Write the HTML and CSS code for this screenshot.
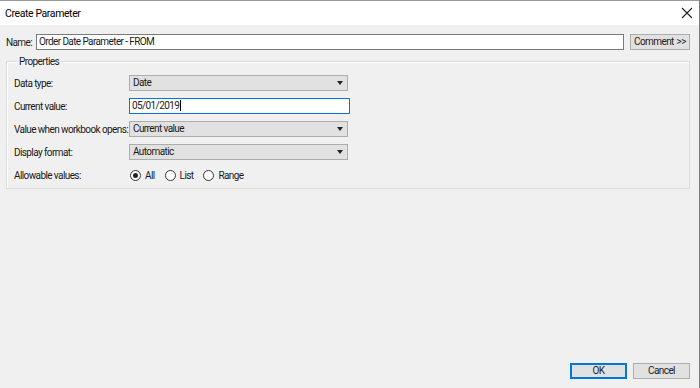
FILE: index.html
```html
<!DOCTYPE html>
<html lang="en">
<head>
    <meta charset="UTF-8">
    <title>Create Parameter</title>
    <link rel="stylesheet" href="styles.css">
</head>
<body>
    <div class="window">
        <div class="titlebar">
            <span class="title">Create Parameter</span>
            <svg class="close" width="12" height="12" viewBox="0 0 12 12">
                <path d="M1 1 L11 11 M11 1 L1 11" stroke="#222" stroke-width="1.1" fill="none"/>
            </svg>
        </div>
        <div class="content">
            <div class="name-row">
                <label class="name-label">Name:</label>
                <div class="textbox name-input">Order Date Parameter - FROM</div>
                <div class="button comment">Comment &gt;&gt;</div>
            </div>

            <fieldset class="properties">
                <legend>Properties</legend>
                <div class="row">
                    <span class="label">Data type:</span>
                    <div class="dropdown"><span>Date</span><span class="arrow"></span></div>
                </div>
                <div class="row">
                    <span class="label">Current value:</span>
                    <div class="textbox focused">05/01/2019<span class="caret"></span></div>
                </div>
                <div class="row">
                    <span class="label">Value when workbook opens:</span>
                    <div class="dropdown"><span>Current value</span><span class="arrow"></span></div>
                </div>
                <div class="row">
                    <span class="label">Display format:</span>
                    <div class="dropdown"><span>Automatic</span><span class="arrow"></span></div>
                </div>
                <div class="row">
                    <span class="label">Allowable values:</span>
                    <div class="radios">
                        <span class="radio checked"></span><span class="radio-text">All</span>
                        <span class="radio"></span><span class="radio-text">List</span>
                        <span class="radio"></span><span class="radio-text">Range</span>
                    </div>
                </div>
            </fieldset>

            <div class="spacer"></div>

            <div class="footer">
                <div class="button ok">OK</div>
                <div class="button">Cancel</div>
            </div>
        </div>
    </div>
</body>
</html>
```

FILE: styles.css
```css
body {
    margin: 0;
    font-family: 'Roboto', 'Liberation Sans', sans-serif;
    font-size: 10px;
    letter-spacing: -0.6px;
    color: #1a1a1a;
    background-color: #f0f0f0;
    white-space: nowrap;
}
.window {
    width: 699px;
    height: 387px;
    border-top: 1px solid #9a9a9a;
    border-right: 1px solid #7d7d7d;
    display: flex;
    flex-direction: column;
    background-color: #f0f0f0;
}
.titlebar {
    height: 24px;
    background-color: white;
    display: flex;
    align-items: center;
    justify-content: space-between;
    padding: 0 6px 0 5px;
}
.title {
    font-size: 10.5px;
    letter-spacing: -0.4px;
    color: #000;
}
.close {
    display: block;
}
.content {
    flex: 1;
    display: flex;
    flex-direction: column;
    padding: 9px 9px 9px 6px;
}
.name-row {
    display: flex;
    align-items: center;
    height: 16px;
}
.name-label {
    width: 30px;
    flex-shrink: 0;
}
.textbox {
    height: 14px;
    line-height: 14px;
    border: 1px solid #7a7a7a;
    background-color: white;
    padding: 0 2px;
    box-sizing: content-box;
}
.name-input {
    width: 582px;
}
.button {
    height: 14px;
    line-height: 14px;
    border: 1px solid #adadad;
    background-color: #e1e1e1;
    text-align: center;
    color: #222;
}
.comment {
    width: 58px;
    margin-left: 6px;
    word-spacing: 1px;
}
.properties {
    margin: 6px 0 0 0;
    padding: 8px 7px 5px 7px;
    border: 1px solid #dcdcdc;
    box-shadow: inset 1px 1px 0 white;
}
legend {
    padding: 0 1px;
    margin-left: 4px;
}
.row {
    display: flex;
    align-items: center;
    height: 16px;
    margin-bottom: 7px;
}
.row:last-child {
    margin-bottom: 0;
}
.label {
    width: 115px;
    flex-shrink: 0;
}
.dropdown {
    width: 211px;
    height: 14px;
    line-height: 14px;
    border: 1px solid #adadad;
    background-color: #e1e1e1;
    padding: 0 3px;
    display: flex;
    justify-content: space-between;
    align-items: center;
}
.arrow {
    width: 0;
    height: 0;
    border-left: 3.5px solid transparent;
    border-right: 3.5px solid transparent;
    border-top: 4px solid #222;
    margin-right: 1px;
}
.textbox.focused {
    width: 215px;
    border-color: #0078d7;
    padding: 0 2px;
}
.caret {
    display: inline-block;
    width: 1px;
    height: 11px;
    margin-left: 1px;
    background-color: #000;
    vertical-align: -2px;
}
.radios {
    display: flex;
    align-items: center;
    padding-left: 1px;
}
.radio {
    width: 9px;
    height: 9px;
    border: 1px solid #333;
    border-radius: 50%;
    background-color: white;
    position: relative;
}
.radio.checked::after {
    content: "";
    position: absolute;
    left: 2px;
    top: 2px;
    width: 5px;
    height: 5px;
    border-radius: 50%;
    background-color: #222;
}
.radio-text {
    margin-left: 4px;
    margin-right: 10px;
}
.spacer {
    flex: 1;
}
.footer {
    display: flex;
    justify-content: flex-end;
    gap: 6px;
}
.footer .button {
    width: 55px;
}
.button.ok {
    border-color: #0078d7;
    box-shadow: inset 0 0 0 1px #0078d7;
}
```
